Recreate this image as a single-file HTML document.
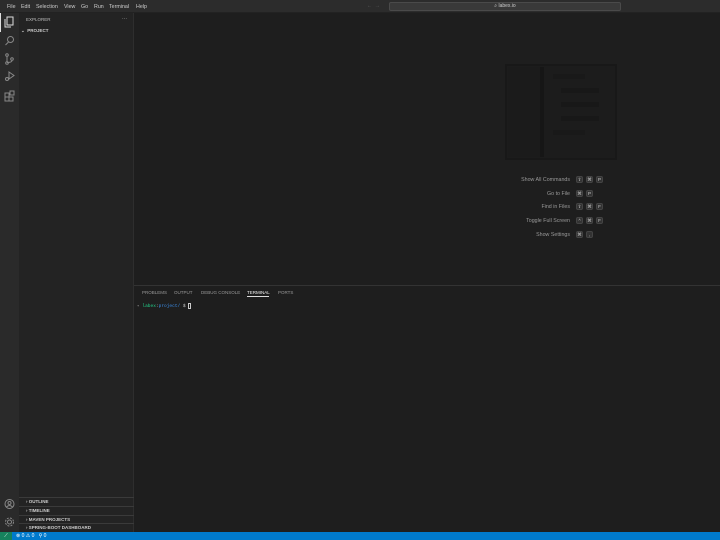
<!DOCTYPE html><html><head><meta charset="utf-8"><style>
*{margin:0;padding:0;box-sizing:border-box}
body{width:720px;height:540px;background:#1e1e1e;font-family:"Liberation Sans",sans-serif;position:relative;overflow:hidden;color:#ccc}
.a{position:absolute}
.m{position:absolute;top:3.5px;font-size:5.3px;color:#ccc}
.p{position:absolute;top:290px;font-size:4.5px;color:#999}
.k{display:inline-block;background:#333;border:1px solid #444;border-radius:2px;width:7px;height:7px;font-size:4.5px;text-align:center;line-height:6px;margin-left:3px;color:#ccc}
.sec{position:absolute;left:19px;width:115px;height:8.5px;border-top:1px solid #3a3a3a;font-size:4.5px;font-weight:bold;color:#ccc;padding-left:7px;line-height:8px}
</style></head><body>
<div class="a" style="left:0;top:0;width:720px;height:13px;background:#2c2c2c;border-bottom:1px solid #222"></div>
<div class="m" style="left:7px">File</div><div class="m" style="left:21px">Edit</div><div class="m" style="left:36px">Selection</div><div class="m" style="left:64px">View</div><div class="m" style="left:81px">Go</div><div class="m" style="left:94px">Run</div><div class="m" style="left:109px">Terminal</div><div class="m" style="left:136px">Help</div>
<div class="a" style="left:389px;top:2px;width:232px;height:9px;background:#393939;border:1px solid #4a4a4a;border-radius:2px;font-size:5px;text-align:center;line-height:7px;color:#ccc">⌕ labex.io</div>
<div class="a" style="left:367px;top:3px;font-size:5px;color:#666">←&nbsp; →</div>
<div class="a" style="left:0;top:13px;width:19px;height:519px;background:#2a2a2a"></div>
<div class="a" style="left:0;top:13px;width:1px;height:19px;background:#ddd"></div>
<svg class="a" style="left:0;top:13px" width="19" height="110" fill="none" stroke="#888" stroke-width="1">
<rect x="7" y="4" width="6" height="8" stroke="#ddd"/><path d="M5 6v8h6" stroke="#ddd"/>
<circle cx="10.5" cy="26.5" r="3"/><path d="M8.5 29l-3 3"/>
<circle cx="7" cy="42" r="1.3"/><circle cx="7" cy="50" r="1.3"/><circle cx="12" cy="46" r="1.3"/><path d="M7 43.5v5M12 47.5q0 2-5 2"/>
<path d="M9 59l5 3.5-5 3.5z"/><circle cx="7" cy="66" r="1.5"/>
<rect x="5" y="80" width="4" height="4"/><rect x="5" y="84" width="4" height="4"/><rect x="9" y="84" width="4" height="4"/><rect x="10" y="78" width="4" height="4"/>
</svg>
<svg class="a" style="left:0;top:497px" width="19" height="30" fill="none" stroke="#888" stroke-width="1">
<circle cx="9.5" cy="7" r="4.5"/><circle cx="9.5" cy="6" r="1.5"/><path d="M6.5 10q3-3 6 0"/>
<circle cx="9.5" cy="25" r="2"/><circle cx="9.5" cy="25" r="4" stroke-dasharray="2 1.2"/>
</svg>
<div class="a" style="left:19px;top:13px;width:115px;height:519px;background:#232323;border-right:1px solid #2e2e2e"></div>
<div class="a" style="left:26px;top:17px;font-size:4.5px;color:#bbb">EXPLORER</div>
<div class="a" style="left:122px;top:16px;font-size:5px;color:#bbb">···</div>
<div class="a" style="left:21px;top:28px;font-size:4.5px;font-weight:bold;color:#ccc">⌄&nbsp; PROJECT</div>
<div class="sec" style="top:497px">› OUTLINE</div>
<div class="sec" style="top:506px">› TIMELINE</div>
<div class="sec" style="top:514.5px">› MAVEN PROJECTS</div>
<div class="sec" style="top:523px">› SPRING-BOOT DASHBOARD</div>
<svg class="a" style="left:505px;top:64px" width="112" height="96">
<rect x="1" y="1" width="110" height="94" fill="#1c1c1c" stroke="#181818" stroke-width="2"/>
<rect x="3" y="3" width="32" height="90" fill="#1b1b1b"/><rect x="39" y="3" width="70" height="90" fill="#1c1c1c"/>
<rect x="35" y="3" width="4" height="90" fill="#161616"/>
<rect x="48" y="10" width="32" height="5" fill="#191919"/>
<rect x="56" y="24" width="38" height="5" fill="#181818"/>
<rect x="56" y="38" width="38" height="5" fill="#181818"/>
<rect x="56" y="52" width="38" height="5" fill="#181818"/>
<rect x="48" y="66" width="32" height="5" fill="#191919"/>
</svg>
<div class="a" style="left:460px;top:174px;width:110px;text-align:right;font-size:5.3px;color:#999;line-height:13.7px">Show All Commands<br>Go to File<br>Find in Files<br>Toggle Full Screen<br>Show Settings</div>
<div class="a" style="left:573px;top:174px;line-height:13.7px;font-size:5px">
<span class="k">⇧</span><span class="k">⌘</span><span class="k">P</span><br><span class="k">⌘</span><span class="k">P</span><br><span class="k">⇧</span><span class="k">⌘</span><span class="k">F</span><br><span class="k">^</span><span class="k">⌘</span><span class="k">F</span><br><span class="k">⌘</span><span class="k">,</span></div>
<div class="a" style="left:134px;top:285px;width:586px;height:1px;background:#333"></div>
<div class="p" style="left:142px">PROBLEMS</div><div class="p" style="left:174px">OUTPUT</div><div class="p" style="left:201px">DEBUG CONSOLE</div><div class="p" style="left:247px;color:#eee">TERMINAL</div><div class="p" style="left:278px">PORTS</div>
<div class="a" style="left:247px;top:296px;width:22px;height:1px;background:#ddd"></div>
<div class="a" style="left:137px;top:302.5px;font-family:'Liberation Mono',monospace;font-size:4.5px;color:#ccc">▫ <span style="color:#23d18b">labex</span>:<span style="color:#3b8eea">project/</span> $ <span style="display:inline-block;width:3px;height:6px;border:1px solid #ccc;vertical-align:middle"></span></div>
<div class="a" style="left:0;top:532px;width:720px;height:8px;background:#007acc"></div>
<div class="a" style="left:0;top:532px;width:12px;height:8px;background:#16825d;font-size:5px;color:#fff;text-align:center;line-height:8px">⟋</div>
<div class="a" style="left:16px;top:532.5px;font-size:5px;color:#fff;line-height:7px">⊗ 0 ⚠ 0&nbsp;&nbsp; ⚲ 0</div>
</body></html>
